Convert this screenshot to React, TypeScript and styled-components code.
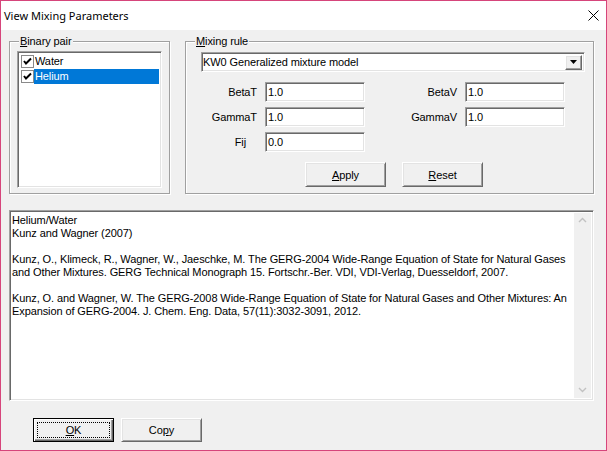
import React from "react";
import styled, { createGlobalStyle } from "styled-components";

const GlobalStyle = createGlobalStyle`
  html, body {
    margin: 0;
    padding: 0;
    background: #ffffff;
  }
  body {
    font-family: "Liberation Sans", Arial, sans-serif;
    font-size: 11px;
    letter-spacing: -0.1px;
    color: #000000;
  }
`;

const Window = styled.div`
  width: 607px;
  height: 451px;
  box-sizing: border-box;
  border: 1px solid #d6457b;
  display: flex;
  flex-direction: column;
  background: #f0f0f0;
  overflow: hidden;
`;

const TitleBar = styled.div`
  height: 29px;
  flex: none;
  background: #ffffff;
  display: flex;
  align-items: center;
  justify-content: space-between;
  padding-left: 3px;
  font-family: "Noto Sans", "Open Sans", sans-serif;
  font-size: 11px;
  letter-spacing: 0;
  color: #000000;
`;

const CloseIcon = styled.svg`
  margin-right: 7px;
`;

const Body = styled.div`
  flex: 1;
  display: flex;
  flex-direction: column;
  padding: 5px 12px 0 8px;
`;

const TopRow = styled.div`
  display: flex;
  gap: 15px;
`;

const Group = styled.fieldset<{ $w: number }>`
  margin: 0;
  width: ${(p) => p.$w}px;
  height: 159px;
  box-sizing: border-box;
  border: 1px solid #a0a0a0;
  box-shadow: inset 1px 1px 0 #ffffff, 1px 1px 0 #ffffff;
  padding: 3px 7px 5px 7px;
  min-width: 0;
`;

const GroupLegend = styled.legend`
  margin-left: 2px;
  padding: 0 1px;
  line-height: 13px;
  font-size: 11px;
  background: #f0f0f0;
`;

const Sunken = styled.div`
  box-sizing: border-box;
  background: #ffffff;
  border: 1px solid;
  border-color: #a0a0a0 #ffffff #ffffff #a0a0a0;
  box-shadow: inset 1px 1px 0 #696969, inset -1px -1px 0 #e3e3e3;
`;

const ListBox = styled(Sunken)`
  width: 145px;
  height: 137px;
  padding: 2px;
`;

const ListItem = styled.div`
  display: flex;
  align-items: center;
  height: 15px;
`;

const CheckBox = styled.span`
  width: 13px;
  height: 13px;
  box-sizing: border-box;
  margin: 0 0 0 1px;
  border: 1px solid #8a8a8a;
  background: #ffffff;
  display: flex;
  align-items: center;
  justify-content: center;
  flex: none;
`;

const ItemText = styled.span<{ $selected?: boolean }>`
  flex: 1;
  height: 15px;
  line-height: 15px;
  padding-left: 1px;
  background: ${(p) => (p.$selected ? "#0078d7" : "transparent")};
  color: ${(p) => (p.$selected ? "#ffffff" : "#000000")};
`;

const MixingBody = styled.div`
  padding: 1px 1px 0 8px;
  display: flex;
  flex-direction: column;
`;

const Combo = styled(Sunken)`
  width: 384px;
  height: 20px;
  display: flex;
  align-items: center;
  padding: 2px 2px 2px 1px;
`;

const ComboText = styled.span`
  flex: 1;
`;

const ComboButton = styled.span`
  width: 17px;
  height: 15px;
  box-sizing: border-box;
  background: #f0f0f0;
  border: 1px solid;
  border-color: #ffffff #696969 #696969 #ffffff;
  box-shadow: inset -1px -1px 0 #a0a0a0, inset 1px 1px 0 #e3e3e3;
  display: flex;
  align-items: center;
  justify-content: center;
`;

const FieldGrid = styled.div`
  margin-top: 10px;
  display: grid;
  grid-template-columns: 56px 100px 84px 100px;
  grid-auto-rows: 20px;
  column-gap: 8px;
  row-gap: 5px;
  align-items: center;
`;

const FieldLabel = styled.span<{ $pad?: number }>`
  text-align: right;
  padding-right: ${(p) => p.$pad ?? 0}px;
`;

const Field = styled(Sunken)`
  height: 20px;
  padding: 2px 2px 0 2px;
  line-height: 15px;
`;

const ActionRow = styled.div`
  margin-top: 10px;
  padding-left: 104px;
  display: flex;
  gap: 16px;
`;

const Button = styled.button<{ $h?: number; $default?: boolean }>`
  width: 81px;
  height: ${(p) => p.$h ?? 24}px;
  box-sizing: border-box;
  margin: 0;
  padding: 0;
  position: relative;
  font-family: "Liberation Sans", Arial, sans-serif;
  font-size: 11px;
  letter-spacing: -0.1px;
  color: #000000;
  background: #f0f0f0;
  border: 1px solid;
  border-color: ${(p) =>
    p.$default ? "#000000" : "#ffffff #696969 #696969 #ffffff"};
  box-shadow: ${(p) =>
    p.$default
      ? "inset 1px 1px 0 #ffffff, inset -1px -1px 0 #696969, inset -2px -2px 0 #a0a0a0"
      : "inset 1px 1px 0 #e3e3e3, inset -1px -1px 0 #a0a0a0"};

  ${(p) =>
    p.$default &&
    `
    &::after {
      content: "";
      position: absolute;
      inset: 3px;
      border: 1px dotted #000000;
    }
  `}
`;

const TextPanel = styled(Sunken)`
  margin-top: 16px;
  width: 585px;
  height: 191px;
  display: flex;
  padding: 2px;
`;

const TextContent = styled.div`
  flex: 1;
  padding: 1px 0 0 0;
  line-height: 13px;
  white-space: nowrap;
`;

const Para = styled.div`
  margin-bottom: 13px;
`;

const ScrollBar = styled.div`
  width: 17px;
  background: #f0f0f0;
  display: flex;
  flex-direction: column;
  justify-content: space-between;
  align-items: center;
  padding: 4px 0 5px;
`;

const BottomRow = styled.div`
  margin-top: 17px;
  padding-left: 24px;
  display: flex;
  gap: 7px;
`;

const Check = () => (
  <svg width="9" height="9" viewBox="0 0 9 9">
    <path d="M1 4 L3 6.5 L8 1.5" stroke="#000" strokeWidth="2" fill="none" />
  </svg>
);

const Chevron = ({ up }: { up?: boolean }) => (
  <svg width="9" height="6" viewBox="0 0 9 6">
    <path
      d={up ? "M1 5 L4.5 1.5 L8 5" : "M1 1 L4.5 4.5 L8 1"}
      stroke="#c2c2c2"
      strokeWidth="1.4"
      fill="none"
    />
  </svg>
);

export default function App() {
  return (
    <>
      <GlobalStyle />
      <Window>
        <TitleBar>
          <span>View Mixing Parameters</span>
          <CloseIcon width="11" height="11" viewBox="0 0 11 11">
            <path d="M0.5 0.5 L10.5 10.5 M10.5 0.5 L0.5 10.5" stroke="#000" strokeWidth="1" />
          </CloseIcon>
        </TitleBar>
        <Body>
          <TopRow>
            <Group $w={161}>
              <GroupLegend>
                <u>B</u>inary pair
              </GroupLegend>
              <ListBox>
                <ListItem>
                  <CheckBox>
                    <Check />
                  </CheckBox>
                  <ItemText>Water</ItemText>
                </ListItem>
                <ListItem>
                  <CheckBox>
                    <Check />
                  </CheckBox>
                  <ItemText $selected>Helium</ItemText>
                </ListItem>
              </ListBox>
            </Group>
            <Group $w={409}>
              <GroupLegend>
                <u>M</u>ixing rule
              </GroupLegend>
              <MixingBody>
                <Combo>
                  <ComboText>KW0 Generalized mixture model</ComboText>
                  <ComboButton>
                    <svg width="7" height="4" viewBox="0 0 7 4">
                      <polygon points="0,0 7,0 3.5,4" fill="#000" />
                    </svg>
                  </ComboButton>
                </Combo>
                <FieldGrid>
                  <FieldLabel>BetaT</FieldLabel>
                  <Field>1.0</Field>
                  <FieldLabel>BetaV</FieldLabel>
                  <Field>1.0</Field>
                  <FieldLabel>GammaT</FieldLabel>
                  <Field>1.0</Field>
                  <FieldLabel>GammaV</FieldLabel>
                  <Field>1.0</Field>
                  <FieldLabel $pad={11}>Fij</FieldLabel>
                  <Field>0.0</Field>
                </FieldGrid>
                <ActionRow>
                  <Button $h={25}>
                    <u>A</u>pply
                  </Button>
                  <Button $h={25}>
                    <u>R</u>eset
                  </Button>
                </ActionRow>
              </MixingBody>
            </Group>
          </TopRow>
          <TextPanel>
            <TextContent>
              <div>Helium/Water</div>
              <Para>Kunz and Wagner (2007)</Para>
              <div>
                Kunz, O., Klimeck, R., Wagner, W., Jaeschke, M. The GERG-2004 Wide-Range Equation of State for Natural Gases
              </div>
              <Para>
                and Other Mixtures. GERG Technical Monograph 15. Fortschr.-Ber. VDI, VDI-Verlag, Duesseldorf, 2007.
              </Para>
              <div>
                Kunz, O. and Wagner, W. The GERG-2008 Wide-Range Equation of State for Natural Gases and Other Mixtures: An
              </div>
              <div>Expansion of GERG-2004. J. Chem. Eng. Data, 57(11):3032-3091, 2012.</div>
            </TextContent>
            <ScrollBar>
              <Chevron up />
              <Chevron />
            </ScrollBar>
          </TextPanel>
          <BottomRow>
            <Button $default>
              <u>O</u>K
            </Button>
            <Button>
              Co<u>p</u>y
            </Button>
          </BottomRow>
        </Body>
      </Window>
    </>
  );
}
